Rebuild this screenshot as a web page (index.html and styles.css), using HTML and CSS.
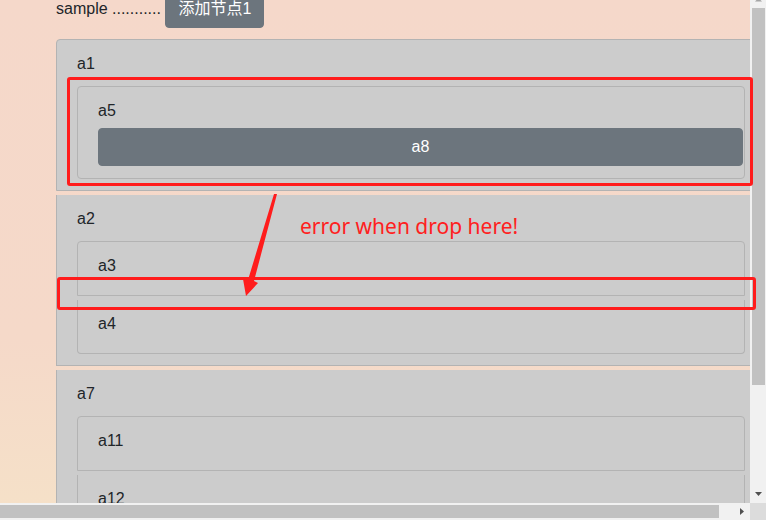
FILE: index.html
```html
<!DOCTYPE html>
<html lang="en">
<head>
<meta charset="utf-8">
<title>sample</title>
<link rel="stylesheet" href="styles.css">
</head>
<body>
<div class="screen">
  <div class="viewport">
    <div class="page">
      <div class="top"><span>sample ...........</span> <button class="btn add-btn">添加节点1</button></div>
      <div class="cards">
        <div class="card">
          <div class="card-title">a1</div>
          <div class="items">
            <div class="item">
              <div class="item-title">a5</div>
              <div class="sub">
                <div class="btn leaf">a8</div>
              </div>
            </div>
          </div>
        </div>
        <div class="card">
          <div class="card-title">a2</div>
          <div class="items">
            <div class="item">
              <div class="item-title">a3</div>
              <div class="sub"></div>
            </div>
            <div class="item">
              <div class="item-title">a4</div>
              <div class="sub"></div>
            </div>
          </div>
        </div>
        <div class="card">
          <div class="card-title">a7</div>
          <div class="items">
            <div class="item">
              <div class="item-title">a11</div>
              <div class="sub"></div>
            </div>
            <div class="item">
              <div class="item-title">a12</div>
              <div class="sub"></div>
            </div>
          </div>
        </div>
      </div>
    </div>
  </div>
  <div class="vscroll">
    <svg class="arrow-up" width="16" height="8" viewBox="0 0 16 8"><polygon points="8.5,-2 12,1.5 5,1.5" fill="#a3a3a3"/></svg>
    <div class="vthumb"></div>
    <div class="spacer"></div>
    <svg class="arrow-down" width="16" height="16" viewBox="0 0 16 16"><polygon points="5,5 12,5 8.5,9" fill="#505050"/></svg>
  </div>
  <div class="hscroll">
    <div class="hthumb"></div>
    <div class="spacer"></div>
    <svg class="arrow-right" width="16" height="17" viewBox="0 0 16 17"><polygon points="6,5 10,8.5 6,12" fill="#505050"/></svg>
  </div>
  <div class="corner"></div>

  <div class="mark mark-1"></div>
  <div class="mark mark-2"></div>
  <svg class="arrow" width="766" height="520" viewBox="0 0 766 520">
    <polygon points="274,194 277,194 254,281 258,283 246,296 243,279 248,280" fill="#ff1c1c"/>
  </svg>
  <div class="note">error when drop here!</div>
</div>
</body>
</html>
```

FILE: styles.css
```css
* { box-sizing: border-box; }

html, body {
  margin: 0;
  padding: 0;
  width: 766px;
  height: 520px;
  overflow: hidden;
}

body {
  font-family: "Liberation Sans", Arial, "Noto Sans CJK SC", sans-serif;
  font-size: 16px;
  line-height: 24px;
  color: #212529;
  background: linear-gradient(to bottom, #f5d8ca 0%, #f5d9c9 65%, #f5e1c8 100%);
}

.screen {
  position: relative;
  display: grid;
  grid-template-columns: 750px 16px;
  grid-template-rows: 503px 17px;
  width: 766px;
  height: 520px;
}

.viewport {
  overflow: hidden;
}

.page {
  margin-top: -10px;
  padding-left: 56px;
  width: 800px;
}

.top {
  margin-bottom: 11px;
  height: 38px;
}

.btn {
  display: inline-block;
  font-family: "Liberation Sans", Arial, "Noto Sans CJK SC", sans-serif;
  font-size: 16px;
  line-height: 24px;
  padding: 6px 12px;
  border: 1px solid #6c757d;
  border-radius: 4px;
  background: #6c757d;
  color: #ffffff;
  text-align: center;
}

.add-btn {
  margin: 0;
  vertical-align: baseline;
}

.cards {
  width: 710px;
}

.card {
  background: #cccccc;
  border: 1px solid #b3b3b3;
  padding: 12px 20px 11px;
}

.card:first-child {
  border-top-left-radius: 4px;
  border-top-right-radius: 4px;
}

.card + .card {
  border-top-width: 0;
  margin-top: 4px;
}

.card-title {
  height: 24px;
  margin-bottom: 10px;
}

.item {
  border: 1px solid #b3b3b3;
  padding: 12px 20px;
}

.item:first-child {
  border-top-left-radius: 4px;
  border-top-right-radius: 4px;
}

.item:last-child {
  border-bottom-left-radius: 4px;
  border-bottom-right-radius: 4px;
}

.item + .item {
  border-top-width: 0;
  margin-top: 4px;
}

.item-title {
  height: 24px;
  margin-bottom: 5px;
}

.leaf {
  display: block;
  width: calc(100% + 19px);
  height: 38px;
}

/* scrollbars */
.vscroll {
  background: #f1f1f1;
  display: flex;
  flex-direction: column;
}

.arrow-up, .arrow-down, .arrow-right {
  display: block;
  flex: none;
}

.vthumb {
  flex: none;
  height: 377px;
  width: 13px;
  margin-left: 2px;
  background: #c1c1c1;
}

.spacer {
  flex: 1;
}

.hscroll {
  background: #f1f1f1;
  display: flex;
}

.hthumb {
  flex: none;
  width: 719px;
  height: 13px;
  margin-top: 2px;
  background: #c1c1c1;
}

.hscroll .spacer {
  flex: 1;
}

.corner {
  background: #dcdcdc;
}

/* annotations */
.mark {
  position: absolute;
  border: 3px solid #ff1c1c;
  border-radius: 3px;
}

.mark-1 {
  left: 67px;
  top: 77px;
  width: 686px;
  height: 109px;
}

.mark-2 {
  left: 57px;
  top: 277px;
  width: 699px;
  height: 33px;
}

.arrow {
  position: absolute;
  left: 0;
  top: 0;
}

.note {
  position: absolute;
  left: 300px;
  top: 216px;
  font-family: "Noto Sans", "Open Sans", sans-serif;
  font-size: 21px;
  line-height: 21px;
  color: #ff2020;
  white-space: nowrap;
}
```
